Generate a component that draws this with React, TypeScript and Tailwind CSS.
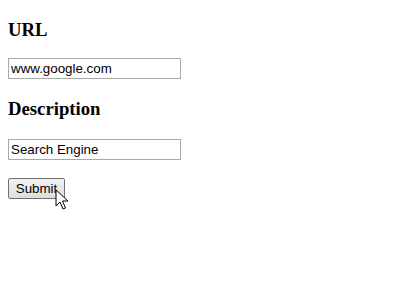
import { FC } from 'react';

const Cursor: FC = () => (
  <svg
    className="absolute left-[55px] top-[189px]"
    width="14"
    height="22"
    viewBox="0 0 14 22"
  >
    <path
      d="M1 1 L1 17 L5 13 L8 20 L10.5 19 L7.5 12 L13 12 Z"
      fill="#fff"
      stroke="#000"
      strokeWidth="1"
      strokeLinejoin="miter"
    />
  </svg>
);

export const App: FC = () => {
  const heading = "font-['Liberation_Serif',serif] text-[18.72px] font-bold leading-[22px] text-black";
  const input =
    "h-[21px] w-[173px] border border-[#a9a9a9] bg-white px-[2px] font-['Liberation_Sans',Arial,sans-serif] text-[13.33px] text-black outline-none";

  return (
    <div className="relative h-[306px] w-[420px] bg-white pl-2 pt-[19px]">
      <div className="flex flex-col items-start">
        <h3 className={heading}>URL</h3>
        <input className={`${input} mt-[17px]`} defaultValue="www.google.com" />
        <h3 className={`${heading} mt-[19px]`}>Description</h3>
        <input className={`${input} mt-[19px]`} defaultValue="Search Engine" />
        <button
          className="mt-[18px] h-[21px] w-[57px] rounded-[2px] border border-[#707070] bg-gradient-to-b from-[#f2f2f2] to-[#dddddd] font-['Liberation_Sans',Arial,sans-serif] text-[13.33px] leading-none text-black"
        >
          Submit
        </button>
      </div>
      <Cursor />
    </div>
  );
};

export default App;
